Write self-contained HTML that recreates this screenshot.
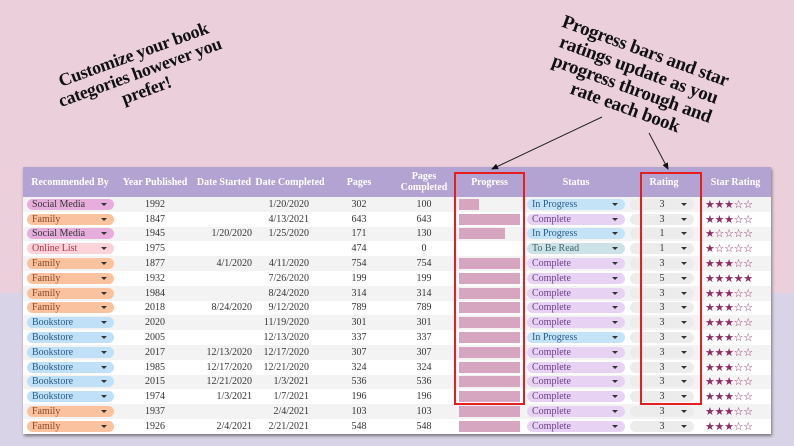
<!DOCTYPE html>
<html><head><meta charset="utf-8"><style>
*{margin:0;padding:0;box-sizing:border-box}
body{width:794px;height:446px;overflow:hidden;position:relative;background:#ebd0dc;font-family:"Liberation Serif",serif}
.lav{position:absolute;left:0;top:293px;width:794px;height:153px;background:#d9d3e7}
.note{position:absolute;font-family:"Liberation Serif",serif;font-weight:bold;color:#111;text-align:center;line-height:20px;font-size:19px;transform-origin:center;letter-spacing:-0.3px}
.n1{left:40px;top:44px;width:200px;transform:rotate(-20deg);font-size:18px;line-height:19px}
.n2{left:535px;top:40px;width:200px;transform:rotate(20deg)}
table{position:absolute;left:23px;top:167px;border-collapse:collapse;table-layout:fixed;width:748px;box-shadow:1px 2px 3px rgba(0,0,0,.45);background:#fff}
th{background:#b3a3d2;color:#fff;font-size:10px;height:30px;font-weight:bold;line-height:11px;text-align:center}
td{height:14.8px;font-size:10px;color:#333;padding:0;white-space:nowrap}
tr:nth-child(even) td{background:#f3f3f3}
.c{text-align:center}.r{text-align:right;padding-right:3px}.dc{text-align:right;padding-right:16px}
.p{display:block;height:11px;border-radius:6px;padding-left:5px;line-height:11px;position:relative;font-size:10px}
.p:after{content:"";position:absolute;right:7px;top:4px;border:3px solid transparent;border-top:3px solid #333}
.rb{margin:0 3px 0 4px}
.sm{background:#e7aedd;color:#333}.fa{background:#fbc2a0;color:#8a4a26}.ol{background:#fcd3d9;color:#b4344a}.bk{background:#bfe0f7;color:#2b5d8c}
.st{margin:0 3px 0 3px}
.ip{background:#c5e3f7;color:#2b5d8c}.co{background:#e8d2f4;color:#6c3e8a}.tb{background:#cde2e6;color:#3b6470}
.ra{margin:0 6px 0 2px;background:#ececec;color:#333;text-align:center;padding-left:0;width:64px}
.bar{height:11px;background:#d6a5bf;margin-left:4px}
.s{color:#8e2c64;font-size:11px;padding-left:5px;letter-spacing:-0.3px}
.box{position:absolute;border:2px solid #e3201f}
</style></head><body>
<div class="lav"></div>
<div class="note n1">Customize your book categories however you prefer!</div>
<div class="note n2">Progress bars and star ratings update as you progress through and rate each book</div>
<table>
<colgroup><col style="width:94px"><col style="width:76px"><col style="width:62px"><col style="width:70px"><col style="width:68px"><col style="width:62px"><col style="width:69px"><col style="width:104px"><col style="width:72px"><col style="width:71px"></colgroup>
<tr><th>Recommended By</th><th>Year Published</th><th>Date Started</th><th>Date Completed</th><th>Pages</th><th>Pages<br>Completed</th><th>Progress</th><th>Status</th><th>Rating</th><th>Star Rating</th></tr>
<tr><td><span class="p rb sm">Social Media</span></td><td class="c">1992</td><td class="r"></td><td class="dc">1/20/2020</td><td class="c">302</td><td class="c">100</td><td><div class="bar" style="width:20px"></div></td><td><span class="p st ip">In Progress</span></td><td><span class="p ra">3</span></td><td class="s">★★★☆☆</td></tr>
<tr><td><span class="p rb fa">Family</span></td><td class="c">1847</td><td class="r"></td><td class="dc">4/13/2021</td><td class="c">643</td><td class="c">643</td><td><div class="bar" style="width:61px"></div></td><td><span class="p st co">Complete</span></td><td><span class="p ra">3</span></td><td class="s">★★★☆☆</td></tr>
<tr><td><span class="p rb sm">Social Media</span></td><td class="c">1945</td><td class="r">1/20/2020</td><td class="dc">1/25/2020</td><td class="c">171</td><td class="c">130</td><td><div class="bar" style="width:46px"></div></td><td><span class="p st ip">In Progress</span></td><td><span class="p ra">1</span></td><td class="s">★☆☆☆☆</td></tr>
<tr><td><span class="p rb ol">Online List</span></td><td class="c">1975</td><td class="r"></td><td class="dc"></td><td class="c">474</td><td class="c">0</td><td></td><td><span class="p st tb">To Be Read</span></td><td><span class="p ra">1</span></td><td class="s">★☆☆☆☆</td></tr>
<tr><td><span class="p rb fa">Family</span></td><td class="c">1877</td><td class="r">4/1/2020</td><td class="dc">4/11/2020</td><td class="c">754</td><td class="c">754</td><td><div class="bar" style="width:61px"></div></td><td><span class="p st co">Complete</span></td><td><span class="p ra">3</span></td><td class="s">★★★☆☆</td></tr>
<tr><td><span class="p rb fa">Family</span></td><td class="c">1932</td><td class="r"></td><td class="dc">7/26/2020</td><td class="c">199</td><td class="c">199</td><td><div class="bar" style="width:61px"></div></td><td><span class="p st co">Complete</span></td><td><span class="p ra">5</span></td><td class="s">★★★★★</td></tr>
<tr><td><span class="p rb fa">Family</span></td><td class="c">1984</td><td class="r"></td><td class="dc">8/24/2020</td><td class="c">314</td><td class="c">314</td><td><div class="bar" style="width:61px"></div></td><td><span class="p st co">Complete</span></td><td><span class="p ra">3</span></td><td class="s">★★★☆☆</td></tr>
<tr><td><span class="p rb fa">Family</span></td><td class="c">2018</td><td class="r">8/24/2020</td><td class="dc">9/12/2020</td><td class="c">789</td><td class="c">789</td><td><div class="bar" style="width:61px"></div></td><td><span class="p st co">Complete</span></td><td><span class="p ra">3</span></td><td class="s">★★★☆☆</td></tr>
<tr><td><span class="p rb bk">Bookstore</span></td><td class="c">2020</td><td class="r"></td><td class="dc">11/19/2020</td><td class="c">301</td><td class="c">301</td><td><div class="bar" style="width:61px"></div></td><td><span class="p st co">Complete</span></td><td><span class="p ra">3</span></td><td class="s">★★★☆☆</td></tr>
<tr><td><span class="p rb bk">Bookstore</span></td><td class="c">2005</td><td class="r"></td><td class="dc">12/13/2020</td><td class="c">337</td><td class="c">337</td><td><div class="bar" style="width:61px"></div></td><td><span class="p st ip">In Progress</span></td><td><span class="p ra">3</span></td><td class="s">★★★☆☆</td></tr>
<tr><td><span class="p rb bk">Bookstore</span></td><td class="c">2017</td><td class="r">12/13/2020</td><td class="dc">12/17/2020</td><td class="c">307</td><td class="c">307</td><td><div class="bar" style="width:61px"></div></td><td><span class="p st co">Complete</span></td><td><span class="p ra">3</span></td><td class="s">★★★☆☆</td></tr>
<tr><td><span class="p rb bk">Bookstore</span></td><td class="c">1985</td><td class="r">12/17/2020</td><td class="dc">12/21/2020</td><td class="c">324</td><td class="c">324</td><td><div class="bar" style="width:61px"></div></td><td><span class="p st co">Complete</span></td><td><span class="p ra">3</span></td><td class="s">★★★☆☆</td></tr>
<tr><td><span class="p rb bk">Bookstore</span></td><td class="c">2015</td><td class="r">12/21/2020</td><td class="dc">1/3/2021</td><td class="c">536</td><td class="c">536</td><td><div class="bar" style="width:61px"></div></td><td><span class="p st co">Complete</span></td><td><span class="p ra">3</span></td><td class="s">★★★☆☆</td></tr>
<tr><td><span class="p rb bk">Bookstore</span></td><td class="c">1974</td><td class="r">1/3/2021</td><td class="dc">1/7/2021</td><td class="c">196</td><td class="c">196</td><td><div class="bar" style="width:61px"></div></td><td><span class="p st co">Complete</span></td><td><span class="p ra">3</span></td><td class="s">★★★☆☆</td></tr>
<tr><td><span class="p rb fa">Family</span></td><td class="c">1937</td><td class="r"></td><td class="dc">2/4/2021</td><td class="c">103</td><td class="c">103</td><td><div class="bar" style="width:61px"></div></td><td><span class="p st co">Complete</span></td><td><span class="p ra">3</span></td><td class="s">★★★☆☆</td></tr>
<tr><td><span class="p rb fa">Family</span></td><td class="c">1926</td><td class="r">2/4/2021</td><td class="dc">2/21/2021</td><td class="c">548</td><td class="c">548</td><td><div class="bar" style="width:61px"></div></td><td><span class="p st co">Complete</span></td><td><span class="p ra">3</span></td><td class="s">★★★☆☆</td></tr>
</table>
<div class="box" style="left:454px;top:172px;width:71px;height:233px"></div>
<div class="box" style="left:640px;top:172px;width:62px;height:233px"></div>
<svg style="position:absolute;left:0;top:0" width="794" height="446">
<defs><marker id="a" markerWidth="8" markerHeight="8" refX="6" refY="4" orient="auto"><path d="M0,1 L7,4 L0,7 z" fill="#111"/></marker></defs>
<line x1="602" y1="117" x2="492" y2="169" stroke="#222" stroke-width="1" marker-end="url(#a)"/>
<line x1="649" y1="133" x2="668" y2="169" stroke="#222" stroke-width="1" marker-end="url(#a)"/>
</svg>
</body></html>
